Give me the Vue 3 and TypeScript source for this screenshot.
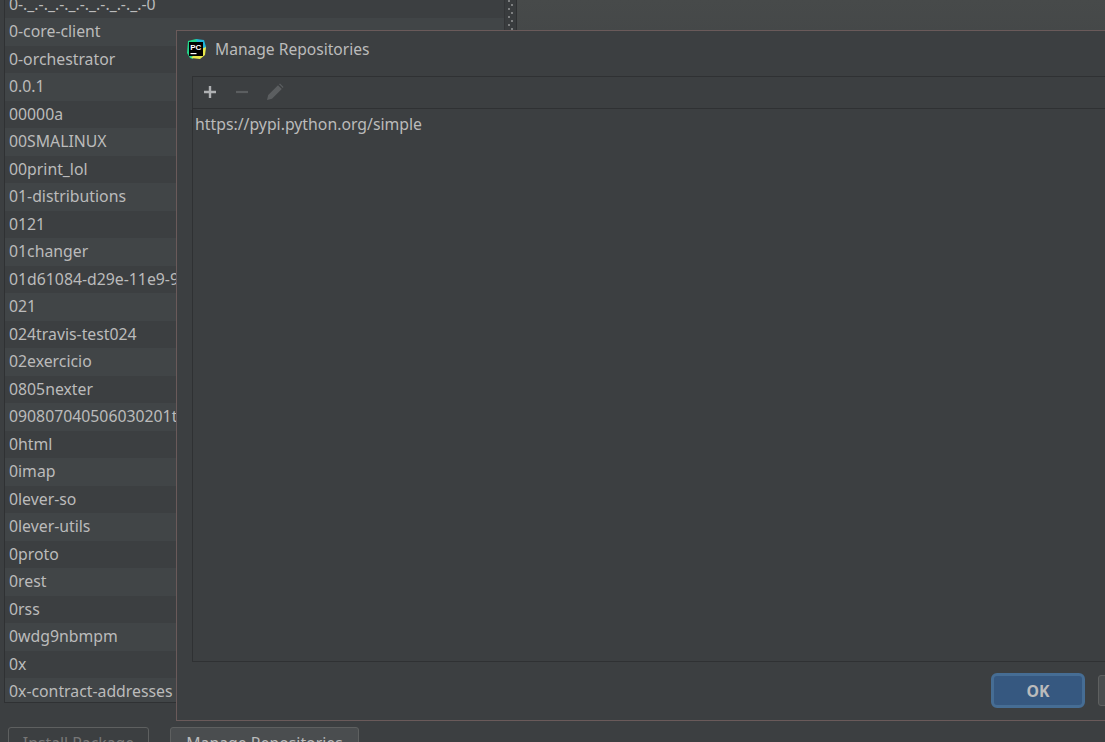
<script setup lang="ts">
const packages: string[] = [
  '0-._.-._.-._.-._.-._.-._.-0',
  '0-core-client',
  '0-orchestrator',
  '0.0.1',
  '00000a',
  '00SMALINUX',
  '00print_lol',
  '01-distributions',
  '0121',
  '01changer',
  '01d61084-d29e-11e9-96d1-7c5cf84ffe8e',
  '021',
  '024travis-test024',
  '02exercicio',
  '0805nexter',
  '090807040506030201testpip',
  '0html',
  '0imap',
  '0lever-so',
  '0lever-utils',
  '0proto',
  '0rest',
  '0rss',
  '0wdg9nbmpm',
  '0x',
  '0x-contract-addresses',
]

const repositories: string[] = ['https://pypi.python.org/simple']
</script>

<template>
  <div class="window">
    <div class="top">
      <ul class="package-list">
        <li v-for="name in packages" :key="name">{{ name }}</li>
      </ul>
      <div class="splitter"><span class="grip" /></div>
      <div class="right" />
    </div>
    <div class="actions">
      <button class="btn install">Install Package</button>
      <button class="btn manage">Manage Repositories</button>
    </div>

    <section class="dialog">
      <header class="dialog-title">
        <svg class="logo" width="22" height="22" viewBox="0 0 22 22">
          <path d="M3 3 L11 1 L14 2 L8 21 L5 20 L2 15 Z" fill="#21d789" />
          <path d="M11 1 L19 2 L21 9 L20 13 L13 8 Z" fill="#1fb5d8" />
          <path d="M21 9 L20 17 L15 21 L6 20 L14 12 Z" fill="#e8e84a" />
          <rect x="4" y="4" width="14" height="14" fill="#000" />
          <rect x="5.500" y="15" width="6" height="1.200" fill="#fff" />
          <text x="5.200" y="11.500" class="logo-text">PC</text>
        </svg>
        <span>Manage Repositories</span>
      </header>
      <div class="dialog-body">
        <div class="repo-panel">
          <div class="toolbar">
            <svg width="16" height="16" viewBox="0 0 16 16">
              <path d="M8 2v12M2 8h12" stroke="#afb1b3" stroke-width="2.400" />
            </svg>
            <svg width="16" height="16" viewBox="0 0 16 16">
              <path d="M2 8h12" stroke="#5b5e60" stroke-width="2.200" />
            </svg>
            <svg width="18" height="18" viewBox="0 0 18 18">
              <path d="M1 17l1.200-5L12 2.200l3.800 3.800L6 15.800z M13 1.200l1-.7 3.500 3.500-.7 1z" fill="#5b5e60" />
            </svg>
          </div>
          <div class="repo-list">
            <div v-for="url in repositories" :key="url" class="repo-row">{{ url }}</div>
          </div>
        </div>
        <div class="dialog-footer">
          <button class="ok">OK</button>
          <button class="cancel">Cancel</button>
        </div>
      </div>
    </section>
  </div>
</template>

<style scoped>
.window {
  position: relative;
  width: 1105px;
  height: 742px;
  overflow: hidden;
  background: #3c3f41;
  font-family: "Noto Sans", "Noto Sans CJK SC", sans-serif;
  font-size: 15.800px;
  color: #bbbbbb;
}

.top {
  display: flex;
  height: 703px;
  padding-left: 4px;
  box-sizing: border-box;
}

.package-list {
  list-style: none;
  width: 500px;
  flex-shrink: 0;
  margin: -9.500px 0 0;
  padding: 0;
  overflow: hidden;
  box-sizing: border-box;
  border-left: 1px solid #2f3133;
  border-bottom: 1px solid #2f3133;
}

.package-list li {
  height: 27.500px;
  line-height: 27.500px;
  padding-left: 4px;
  white-space: nowrap;
}

.package-list li:nth-child(even) {
  background: #414547;
}

.splitter {
  width: 13px;
  flex-shrink: 0;
  background: #393c3e;
  border-left: 1px solid #333537;
  border-right: 1px solid #2f3133;
  box-sizing: border-box;
}

.grip {
  display: block;
  width: 6px;
  height: 30px;
  margin-left: 3px;
  background-image:
    linear-gradient(#7d7f80 2px, transparent 2px),
    linear-gradient(#7d7f80 2px, transparent 2px);
  background-size: 2px 8px;
  background-repeat: repeat-y;
  background-position: 0 0, 3px 4px;
}

.right {
  flex: 1;
  background: linear-gradient(#474a4a, #3f4244 120px);
}

.actions {
  display: flex;
  gap: 21px;
  padding: 24px 0 0 8px;
}

.btn {
  height: 31px;
  padding: 0;
  border: 1px solid #5e6060;
  border-radius: 3px;
  background: #4a4d4f;
  font: inherit;
  color: #bbbbbb;
  box-sizing: border-box;
}

.install {
  width: 141px;
  color: #777777;
  background: #3c3f41;
}

.manage {
  width: 189px;
}

.dialog {
  position: absolute;
  left: 176px;
  top: 30px;
  width: 1040px;
  height: 691px;
  display: flex;
  flex-direction: column;
  box-sizing: border-box;
  border: 1px solid #6a5a5a;
  background: #3c3f41;
}

.dialog-title {
  height: 36px;
  flex-shrink: 0;
  display: flex;
  align-items: center;
  gap: 8px;
  padding: 0 0 0 8px;
  font-size: 15.600px;
}

.logo {
  flex-shrink: 0;
}

.logo-text {
  font-family: "Liberation Sans", sans-serif;
  font-size: 8px;
  font-weight: 700;
  fill: #ffffff;
}

.dialog-body {
  flex: 1;
  display: flex;
  flex-direction: column;
  padding: 9px 0 0 15px;
  min-height: 0;
}

.repo-panel {
  height: 586px;
  flex-shrink: 0;
  display: flex;
  flex-direction: column;
  box-sizing: border-box;
  border: 1px solid #2f3133;
}

.toolbar {
  height: 32px;
  flex-shrink: 0;
  display: flex;
  align-items: center;
  gap: 16px;
  padding: 0 0 1px 9px;
  box-sizing: border-box;
  border-bottom: 1px solid #2f3133;
}

.repo-list {
  flex: 1;
  padding-top: 2px;
}

.repo-row {
  height: 27px;
  line-height: 27px;
  padding-left: 2px;
}

.dialog-footer {
  display: flex;
  gap: 13px;
  padding: 11px 0 0 799px;
}

.ok {
  width: 94px;
  height: 35px;
  flex-shrink: 0;
  box-sizing: border-box;
  border: 3px solid #466d94;
  border-radius: 6px;
  background: #365880;
  color: #bbbbbb;
  font: inherit;
  font-weight: 700;
}

.cancel {
  width: 94px;
  height: 31px;
  flex-shrink: 0;
  margin-top: 2px;
  box-sizing: border-box;
  border: 1px solid #5e6060;
  border-radius: 3px;
  background: #4a4d4f;
  color: #bbbbbb;
  font: inherit;
}
</style>
